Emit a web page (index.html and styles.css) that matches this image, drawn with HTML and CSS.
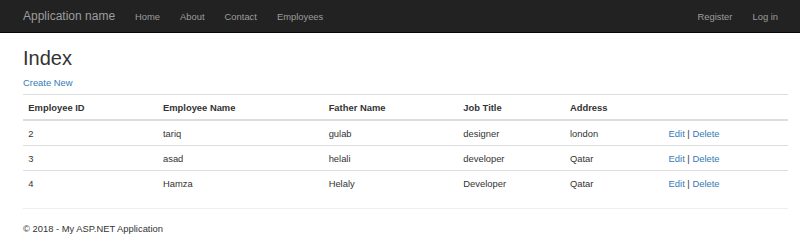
FILE: index.html
```html
<!DOCTYPE html>
<html lang="en">
<head>
  <meta charset="UTF-8" />
  <meta name="viewport" content="width=device-width, initial-scale=1.0" />
  <title>Index - My ASP.NET Application</title>
  <link rel="stylesheet" href="styles.css">
</head>
<body>

  <div class="navbar">
    <div class="container nav-inner">
      <div class="nav-left">
        <a href="#" class="brand">Application name</a>
        <ul class="nav">
          <li><a href="#">Home</a></li>
          <li><a href="#">About</a></li>
          <li><a href="#">Contact</a></li>
          <li><a href="#">Employees</a></li>
        </ul>
      </div>
      <ul class="nav">
        <li><a href="#">Register</a></li>
        <li><a href="#">Log in</a></li>
      </ul>
    </div>
  </div>

  <div class="container body-content">
    <h2>Index</h2>
    <p class="create"><a href="#">Create New</a></p>

    <table class="table">
      <tr>
        <th class="col-id">Employee ID</th>
        <th class="col-name">Employee Name</th>
        <th class="col-father">Father Name</th>
        <th class="col-job">Job Title</th>
        <th class="col-address">Address</th>
        <th></th>
      </tr>
      <tr>
        <td>2</td>
        <td>tariq</td>
        <td>gulab</td>
        <td>designer</td>
        <td>london</td>
        <td><a href="#">Edit</a> | <a href="#">Delete</a></td>
      </tr>
      <tr>
        <td>3</td>
        <td>asad</td>
        <td>helali</td>
        <td>developer</td>
        <td>Qatar</td>
        <td><a href="#">Edit</a> | <a href="#">Delete</a></td>
      </tr>
      <tr>
        <td>4</td>
        <td>Hamza</td>
        <td>Helaly</td>
        <td>Developer</td>
        <td>Qatar</td>
        <td><a href="#">Edit</a> | <a href="#">Delete</a></td>
      </tr>
    </table>

    <hr />
    <footer>
      <p>&copy; 2018 - My ASP.NET Application</p>
    </footer>
  </div>

</body>
</html>
```

FILE: styles.css
```css
body {
  margin: 0;
  font-family: "Liberation Sans", Arial, sans-serif;
  font-size: 9.4px;
  line-height: 13.33px;
  color: #333;
  background: #fff;
}
a {
  color: #337ab7;
  text-decoration: none;
}
.container {
  padding: 0 12px 0 23px;
}

/* Navbar */
.navbar {
  background: #222;
  border-bottom: 1px solid #080808;
  height: 33px;
  box-sizing: border-box;
}
.nav-inner {
  display: flex;
  justify-content: space-between;
}
.nav-left {
  display: flex;
}
.brand {
  color: #9d9d9d;
  font-size: 12px;
  line-height: 13.33px;
  padding: 10px 10px 9px 0;
}
.nav {
  display: flex;
  list-style: none;
  margin: 0;
  padding: 0;
}
.nav a {
  display: block;
  color: #9d9d9d;
  padding: 10px 10px 9px 10px;
}

/* Content */
.body-content h2 {
  font-size: 20px;
  font-weight: 500;
  line-height: 22px;
  margin: 14px 0 7px;
}
.body-content p {
  margin: 0 0 6.7px;
}
.body-content .create {
  margin-bottom: 5px;
}
.table {
  width: 100%;
  border-collapse: collapse;
  margin-bottom: 13px;
}
.table th,
.table td {
  text-align: left;
  padding: 5.33px;
  line-height: 13.33px;
  border-top: 1px solid #ddd;
}
.table th {
  font-weight: bold;
  border-bottom: 2px solid #ddd;
}
.col-id { width: 124px; }
.col-name { width: 155px; }
.col-father { width: 124px; }
.col-job { width: 96px; }
.col-address { width: 88px; }

hr {
  border: 0;
  border-top: 1px solid #eee;
  margin: 13px 0;
}
footer p {
  margin: 0 0 6.7px;
}
```
